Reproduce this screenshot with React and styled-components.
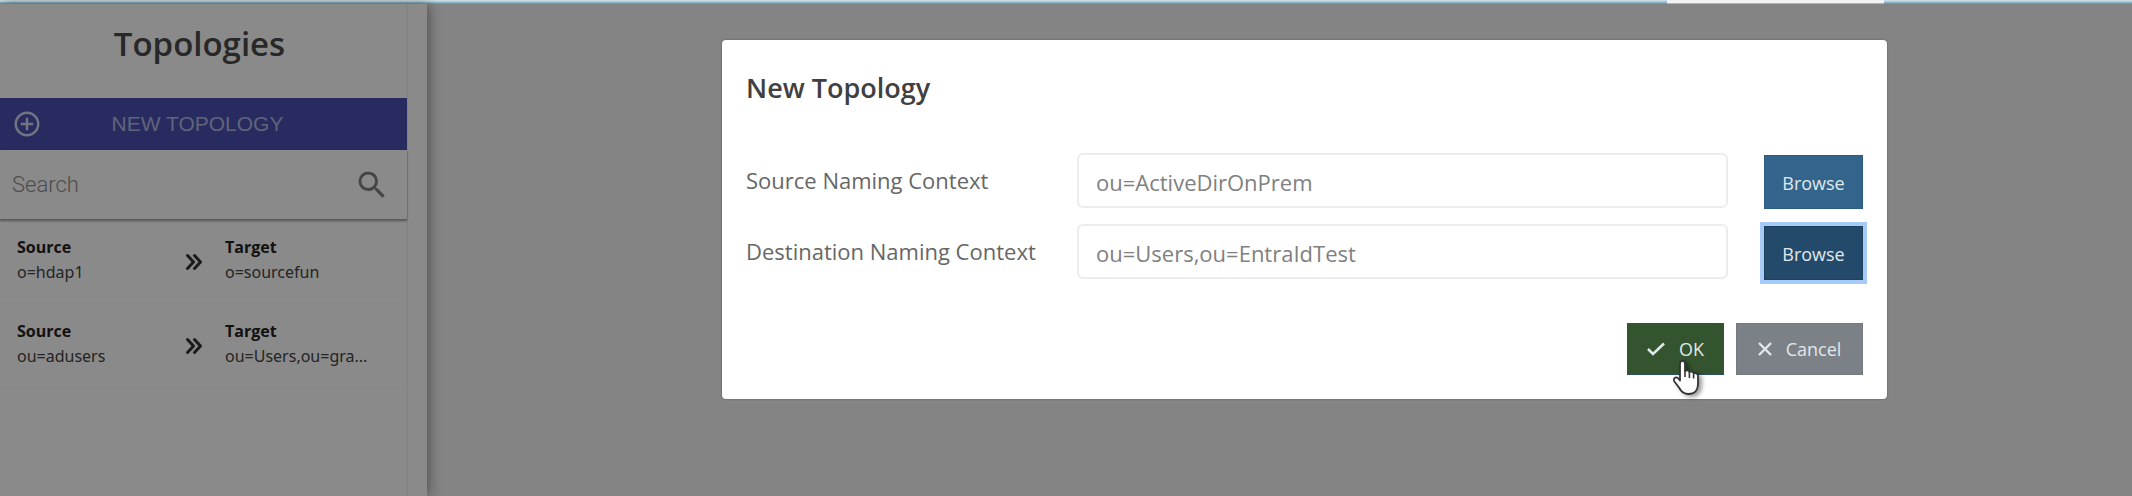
import React from "react";
import styled, { createGlobalStyle, css } from "styled-components";
import { MdAddCircleOutline, MdSearch } from "react-icons/md";

const GlobalStyle = createGlobalStyle`
  *, *::before, *::after { box-sizing: border-box; }
  body {
    margin: 0;
    font-family: "Open Sans", "Noto Sans", sans-serif;
    color: #333;
  }
  button, input { font: inherit; }
  h1, h2, p, ul { margin: 0; padding: 0; }
`;

const Page = styled.div`
  display: flex;
  flex-direction: column;
  min-height: 100vh;
`;

const TopStrip = styled.header`
  display: grid;
  grid-template-columns: 1fr 217px 248px;
  height: 4px;
  background: linear-gradient(#c9dae3 0 1px, #b4cfdb 1px 2px, #88b3c6 2px 3px, #7699a8 3px);
`;

const ActiveTab = styled.span`
  grid-column: 2;
  background: linear-gradient(#f3f3f3 0 3px, #b4b4b4 3px);
`;

const Workspace = styled.div`
  position: relative;
  flex: 1;
  display: flex;
  background: #f4f4f4;
`;

const Sidebar = styled.aside`
  width: 427px;
  padding-right: 19px;
  background: #fff;
  box-shadow: 2px 0 12px rgba(0, 0, 0, 0.4);
`;

const SidebarInner = styled.div`
  height: 100%;
  border-right: 1px solid #f0f0f0;
`;

const SidebarTitle = styled.h1`
  height: 94px;
  padding-top: 16px;
  padding-right: 8px;
  text-align: center;
  font-size: 33px;
  line-height: 48px;
  font-weight: 600;
  color: #4a4a4a;
`;

const NewTopologyButton = styled.button`
  display: grid;
  grid-template-columns: 30px 1fr 42px;
  align-items: center;
  width: 100%;
  height: 52px;
  padding: 0 12px;
  border: 0;
  background: #4850b2;
  color: #b4b8e0;
  font-family: "Liberation Sans", Arial, sans-serif;
  font-size: 21px;

  svg { color: #d2d6f0; }
`;

const SearchBar = styled.label`
  display: flex;
  align-items: center;
  height: 70px;
  padding: 0 17px 0 12px;
  border-bottom: 1px solid #aaa;
  box-shadow: 0 1px 2px rgba(0, 0, 0, 0.4);
  color: #808080;
`;

const SearchInput = styled.input`
  flex: 1;
  min-width: 0;
  padding: 0;
  border: 0;
  outline: 0;
  background: transparent;
  font-family: Roboto, sans-serif;
  font-size: 22px;
  font-weight: 300;

  &::placeholder { color: #909090; opacity: 1; }
`;

const TopologyList = styled.ul`
  list-style: none;
`;

const TopologyItem = styled.li`
  display: grid;
  grid-template-columns: 168px 40px 1fr;
  align-items: center;
  height: 84px;
  padding: 0 28px 0 17px;
  border-bottom: 1px solid #fcfcfc;
`;

const Endpoint = styled.div`
  min-width: 0;
  padding-bottom: 4px;
  font-size: 16px;
  line-height: 25px;
`;

const EndpointRole = styled.p`
  font-weight: 700;
  color: #222;
`;

const EndpointName = styled.p`
  font-family: "Noto Sans", sans-serif;
  white-space: nowrap;
  color: #444;
`;

const Backdrop = styled.div`
  position: absolute;
  inset: 0;
  display: flex;
  justify-content: flex-end;
  align-items: flex-start;
  padding: 36px 245px 36px 24px;
  background: rgba(0, 0, 0, 0.46);
`;

const Dialog = styled.form`
  flex: 0 1 1165px;
  padding: 24px;
  border-radius: 4px;
  background: #fff;
  box-shadow: 0 0 2px rgba(0, 0, 0, 0.4);
`;

const DialogTitle = styled.h2`
  margin-bottom: 39px;
  font-size: 27px;
  line-height: 48px;
  font-weight: 600;
  color: #404040;
`;

const Field = styled.div`
  display: grid;
  grid-template-columns: 331px 1fr 99px;
  align-items: center;
  height: 55px;
  margin-bottom: 16px;
`;

const FieldLabel = styled.label`
  font-size: 22px;
  line-height: 30px;
  font-weight: 400;
  color: #666;
`;

const FieldInput = styled.input`
  min-width: 0;
  height: 55px;
  margin-right: 36px;
  padding: 4px 17px 0;
  border: 2px solid #ececec;
  border-radius: 6px;
  outline: 0;
  background: #fff;
  color: #808080;
  font-size: 22px;
  font-weight: 400;
`;

const Button = styled.button`
  display: inline-flex;
  align-items: center;
  justify-content: center;
  height: 52px;
  padding: 0;
  border: 1px solid ${(p) => p.$border};
  background: ${(p) => p.$fill};
  color: #e0e8ea;
  font-size: 18px;
  line-height: 24px;
`;

const BrowseButton = styled(Button).attrs((p) => ({
  type: "button",
  $fill: p.$focused ? "#234a6a" : "#32648c",
  $border: p.$focused ? "#1d405e" : "#2d5c82",
}))`
  height: 54px;
  margin-top: 4px;
  padding-top: 2px;
  ${(p) => p.$focused && css`box-shadow: 0 0 0 4px #a6cbf7;`}
`;

const Actions = styled.div`
  display: flex;
  justify-content: flex-end;
  gap: 12px;
  margin-top: 46px;
`;

const ActionButton = styled(Button)`
  position: relative;
  width: ${(p) => p.$width};
  gap: 14px;
`;

const Pointer = styled.svg`
  position: absolute;
  left: 43px;
  top: 34px;
  filter: drop-shadow(3px 2px 2px rgba(0, 0, 0, 0.4));
  pointer-events: none;
`;

const topologies = [
  { source: "o=hdap1", target: "o=sourcefun" },
  { source: "ou=adusers", target: "ou=Users,ou=gra..." },
];

function DoubleChevron() {
  return (
    <svg width="18" height="18" viewBox="0 0 18 18" fill="none" stroke="#333" strokeWidth="3" strokeLinecap="round" strokeLinejoin="round" aria-hidden="true">
      <path d="M2.5 2.5 8.5 9l-6 6.5M9.5 2.5 15.500 9l-6 6.500" />
    </svg>
  );
}

function CheckIcon() {
  return (
    <svg width="18" height="14" viewBox="0 0 18 14" fill="none" stroke="currentColor" strokeWidth="2.6" aria-hidden="true">
      <path d="m1 7 5 5L17 1.500" />
    </svg>
  );
}

function CrossIcon() {
  return (
    <svg width="14" height="14" viewBox="0 0 14 14" fill="none" stroke="currentColor" strokeWidth="2.4" aria-hidden="true">
      <path d="m1 1 12 12M13 1 1 13" />
    </svg>
  );
}

function HandPointer() {
  return (
    <Pointer width="32" height="40" viewBox="0 0 32 40" aria-hidden="true">
      <path
        d="M9 5.500C9 1.800 14 1.800 14 5.500V13c1.400-1.200 4-.8 4.400 1 1.600-1 3.800-.4 4.200 1.400 1.800-.8 4.400.2 4.400 2.800V26c0 5-2.600 10-9.500 10-5 0-7.500-2.500-9.500-6.500L3 23c-1-2.500 1.500-4.500 3.800-3L9 22.500Z"
        fill="#fff" stroke="#333" strokeWidth="1.800" strokeLinejoin="round"
      />
      <path d="M14 12v7M18.400 14v6M22.600 15.500v5" fill="none" stroke="#333" strokeWidth="1.600" />
    </Pointer>
  );
}

function NamingContextField({ id, label, value, focused }) {
  return (
    <Field>
      <FieldLabel htmlFor={id}>{label}</FieldLabel>
      <FieldInput id={id} type="text" defaultValue={value} />
      <BrowseButton $focused={focused}>Browse</BrowseButton>
    </Field>
  );
}

export default function App() {
  return (
    <Page>
      <GlobalStyle />
      <TopStrip><ActiveTab /></TopStrip>
      <Workspace>
        <Sidebar>
          <SidebarInner>
            <SidebarTitle>Topologies</SidebarTitle>
            <NewTopologyButton type="button">
              <MdAddCircleOutline size={30} aria-hidden="true" />
              <span>NEW TOPOLOGY</span>
            </NewTopologyButton>
            <SearchBar>
              <SearchInput type="search" placeholder="Search" aria-label="Search" />
              <MdSearch size={36} aria-hidden="true" />
            </SearchBar>
            <TopologyList>
              {topologies.map((t) => (
                <TopologyItem key={t.source}>
                  <Endpoint>
                    <EndpointRole>Source</EndpointRole>
                    <EndpointName>{t.source}</EndpointName>
                  </Endpoint>
                  <DoubleChevron />
                  <Endpoint>
                    <EndpointRole>Target</EndpointRole>
                    <EndpointName>{t.target}</EndpointName>
                  </Endpoint>
                </TopologyItem>
              ))}
            </TopologyList>
          </SidebarInner>
        </Sidebar>
        <Backdrop>
          <Dialog role="dialog" aria-labelledby="dialog-title">
            <DialogTitle id="dialog-title">New Topology</DialogTitle>
            <NamingContextField id="source" label="Source Naming Context" value="ou=ActiveDirOnPrem" />
            <NamingContextField id="destination" label="Destination Naming Context" value="ou=Users,ou=EntraIdTest" focused />
            <Actions>
              <ActionButton type="button" $width="97px" $fill="#34532f" $border="#2c5260">
                <CheckIcon />
                OK
                <HandPointer />
              </ActionButton>
              <ActionButton type="button" $width="127px" $fill="#7c8188" $border="#757a82">
                <CrossIcon />
                Cancel
              </ActionButton>
            </Actions>
          </Dialog>
        </Backdrop>
      </Workspace>
    </Page>
  );
}
